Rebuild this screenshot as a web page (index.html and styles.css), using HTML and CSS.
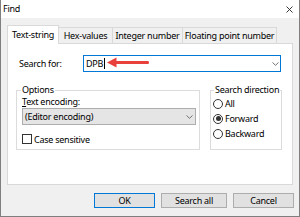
FILE: index.html
```html
<!DOCTYPE html>
<html>
<head>
<meta charset="utf-8">
<link rel="stylesheet" href="styles.css">
</head>
<body>
<div class="window">
  <div class="titlebar">
    <span class="title">Find</span>
    <svg class="close" width="7" height="7" viewBox="0 0 7 7"><path d="M0.5 0.5L6.5 6.5M6.5 0.5L0.5 6.5" stroke="#222" stroke-width="0.9" fill="none"/></svg>
  </div>
  <div class="content">
    <div class="tabs">
      <div class="tab active tab-text">Text-string</div>
      <div class="tab tab-hex">Hex-values</div>
      <div class="tab tab-int">Integer number</div>
      <div class="tab tab-float">Floating point number</div>
    </div>
    <div class="panel">
      <div class="search-row">
        <span class="search-label">Search for:</span>
        <div class="search-input">
          <span class="value">DPB</span><span class="caret"></span>
          <svg class="arrow" width="42" height="11" viewBox="0 0 42 11"><polygon points="0,5.5 9.5,0.5 9.5,10.5" fill="#e8413c"/><rect x="8" y="4.1" width="34" height="2.8" rx="1.2" fill="#e8413c"/></svg>
          <svg class="chev chev-input" width="7" height="4" viewBox="0 0 7 4"><path d="M0.5 0.5L3.5 3.3L6.5 0.5" stroke="#666" stroke-width="0.9" fill="none"/></svg>
        </div>
      </div>
      <div class="groups">
        <fieldset class="group options">
          <legend>Options</legend>
          <div class="field-label"><u>T</u>ext encoding:</div>
          <div class="combo">
            <span>(Editor encoding)</span>
            <svg class="chev chev-combo" width="7" height="4" viewBox="0 0 7 4"><path d="M0.5 0.5L3.5 3.3L6.5 0.5" stroke="#666" stroke-width="0.9" fill="none"/></svg>
          </div>
          <div class="check-row"><span class="checkbox"></span><span>Case sensitive</span></div>
        </fieldset>
        <fieldset class="group direction">
          <legend>Search direction</legend>
          <div class="radio-row"><span class="radio"></span><span>All</span></div>
          <div class="radio-row"><span class="radio checked"></span><span>Forward</span></div>
          <div class="radio-row"><span class="radio"></span><span>Backward</span></div>
        </fieldset>
      </div>
    </div>
    <div class="buttons">
      <div class="btn btn-default">OK</div>
      <div class="btn btn-wide">Search all</div>
      <div class="btn">Cancel</div>
    </div>
  </div>
</div>
</body>
</html>
```
FILE: styles.css
```css
* { box-sizing: border-box; }
html, body { margin: 0; padding: 0; }
body {
  width: 300px;
  height: 217px;
  font-family: "Noto Sans", "Open Sans", sans-serif;
  font-size: 9px;
  letter-spacing: -0.25px;
  color: #000;
  background: #fff;
  overflow: hidden;
}
.window {
  width: 300px;
  height: 217px;
  border: 1px solid #7f7f7f;
  border-top: none;
  background: #f0f0f0;
  display: flex;
  flex-direction: column;
}
.titlebar {
  height: 18px;
  flex: none;
  background: #fff;
  display: flex;
  align-items: center;
  justify-content: space-between;
  padding: 0 6px 0 2px;
}
.title { line-height: 18px; }
.close { display: block; }
.content {
  flex: 1;
  padding: 7px 6px 0 6px;
  display: flex;
  flex-direction: column;
}
.tabs {
  display: flex;
  align-items: flex-end;
  height: 18px;
}
.tab {
  height: 16px;
  line-height: 15px;
  text-align: center;
  border: 1px solid #d9d9d9;
  border-bottom: none;
  background: #f0f0f0;
  margin-left: -1px;
  white-space: nowrap;
}
.tab.active {
  height: 19px;
  margin-bottom: -1px;
  margin-left: 0;
  background: #fff;
  position: relative;
  z-index: 1;
  line-height: 17px;
}
.tab-text { width: 52px; }
.tab-hex { width: 55px; }
.tab-int { width: 71px; }
.tab-float { width: 95px; }
.panel {
  height: 142px;
  background: #fff;
  border: 1px solid #d9d9d9;
  padding: 11px 0 0 8px;
}
.search-row {
  display: flex;
  align-items: center;
  height: 17px;
}
.search-label {
  width: 64px;
  margin-left: 3px;
}
.search-input {
  width: 198px;
  height: 17px;
  border: 1px solid #0078d7;
  padding-left: 2px;
  display: flex;
  align-items: center;
  position: relative;
}
.caret {
  width: 1px;
  height: 11px;
  background: #000;
  margin-left: 1px;
}
.arrow {
  position: absolute;
  left: 23px;
  top: 1px;
}
.chev { display: block; margin-left: auto; }
.chev-input { margin-right: 1px; }
.groups {
  display: flex;
  margin-top: 13px;
}
.group {
  margin: 0;
  border: 1px solid #dcdcdc;
  min-width: 0;
}
.group legend {
  line-height: 10px;
  padding: 0 1px;
  margin-left: -1px;
}
.options {
  width: 184px;
  padding: 1px 3px 5px 5px;
}
.direction {
  width: 72px;
  margin-left: 10px;
  padding: 1px 0 0 2px;
}
.direction legend { margin-left: 1px; white-space: nowrap; }
.field-label { line-height: 12px; }
.field-label u { text-decoration: underline; text-underline-offset: 1px; }
.combo {
  height: 17px;
  background: #e5e5e5;
  border: 1px solid #adadad;
  padding-left: 2px;
  display: flex;
  align-items: center;
}
.chev-combo { margin-right: 2px; }
.check-row {
  margin-top: 9px;
  height: 10px;
  display: flex;
  align-items: center;
  gap: 2px;
}
.checkbox {
  width: 10px;
  height: 10px;
  border: 1px solid #333;
  background: #fff;
}
.radio-row {
  height: 15px;
  display: flex;
  align-items: center;
  gap: 2px;
}
.radio {
  width: 10px;
  height: 10px;
  border: 1px solid #333;
  border-radius: 50%;
  background: #fff;
  display: flex;
  align-items: center;
  justify-content: center;
}
.radio.checked::after {
  content: "";
  width: 5px;
  height: 5px;
  border-radius: 50%;
  background: #333;
}
.buttons {
  display: flex;
  justify-content: flex-end;
  gap: 6px;
  margin-top: 8px;
  margin-right: -1px;
}
.btn {
  width: 61px;
  height: 15px;
  line-height: 13px;
  text-align: center;
  border: 1px solid #adadad;
  background: #e1e1e1;
}
.btn-wide { width: 66px; }
.btn-default { border-color: #0078d7; }
```
